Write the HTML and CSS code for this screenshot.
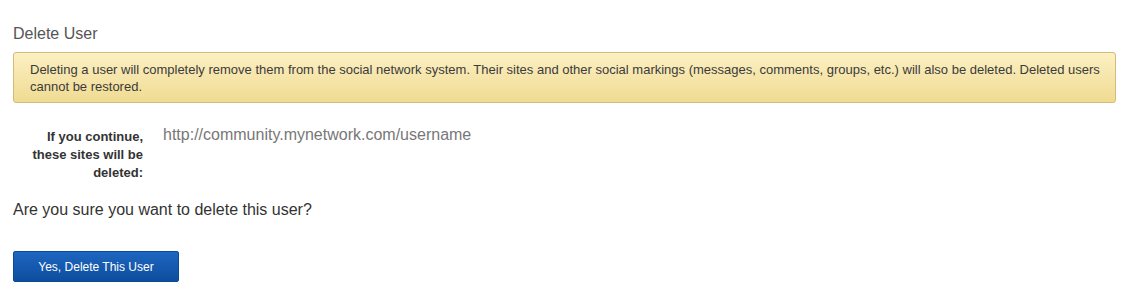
FILE: index.html
```html
<!DOCTYPE html>
<html lang="en">
<head>
  <meta charset="UTF-8" />
  <title>Delete User</title>
  <link rel="stylesheet" href="styles.css">
</head>
<body>
  <div class="page">
    <h2 class="title">Delete User</h2>
    <div class="alert">
      Deleting a user will completely remove them from the social network system. Their sites and other social markings (messages, comments, groups, etc.) will also be deleted. Deleted users cannot be restored.
    </div>
    <div class="field">
      <div class="label">If you continue, these sites will be deleted:</div>
      <div class="value">http://community.mynetwork.com/username</div>
    </div>
    <p class="confirm">Are you sure you want to delete this user?</p>
    <button class="btn">Yes, Delete This User</button>
  </div>
</body>
</html>
```

FILE: styles.css
```css
body {
  margin: 0;
  background: #fff;
  color: #333;
  font-family: 'Liberation Sans', Arial, sans-serif;
}
.page {
  padding: 24px 7px 0 13px;
}
.title {
  margin: 0 0 8px;
  font-size: 16px;
  font-weight: normal;
  line-height: 20px;
  color: #555;
}
.alert {
  background: linear-gradient(#fcf0c3, #f0db92);
  border: 1px solid #d1bc78;
  border-radius: 3px;
  padding: 8px 8px 7px 16px;
  font-size: 13px;
  line-height: 17px;
  color: #3b3b3b;
}
.field {
  display: flex;
  margin-top: 25px;
  gap: 20px;
}
.label {
  width: 130px;
  text-align: right;
  font-size: 13px;
  font-weight: bold;
  line-height: 18px;
}
.value {
  font-size: 16px;
  line-height: 18px;
  color: #777;
  margin-top: -2px;
}
.confirm {
  margin: 18px 0 0;
  font-size: 16px;
  line-height: 20px;
}
.btn {
  margin-top: 31px;
  width: 166px;
  height: 31px;
  background: linear-gradient(#1e66c1, #0d4d9d);
  border: 1px solid #0d4a96;
  border-radius: 2px;
  color: #fff;
  font-family: 'Liberation Sans', Arial, sans-serif;
  font-size: 12px;
  padding: 0;
}
```
